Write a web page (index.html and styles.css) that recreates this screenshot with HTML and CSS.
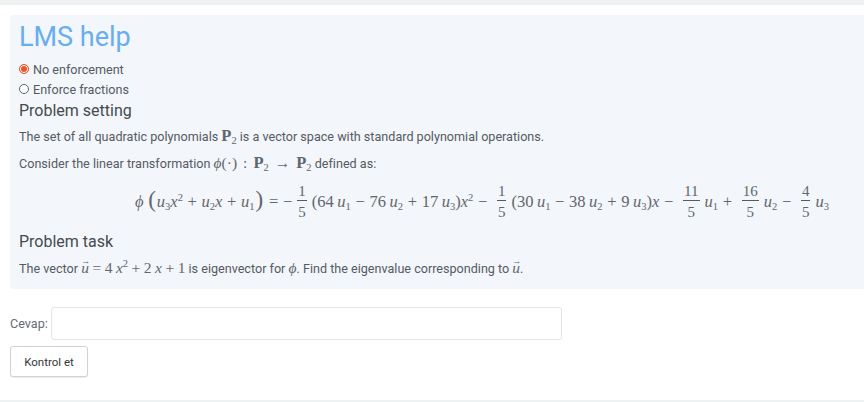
FILE: index.html
```html
<!DOCTYPE html>
<html lang="tr">
<head>
<meta charset="utf-8">
<title>LMS help</title>
<link rel="stylesheet" href="styles.css">
</head>
<body>
<div class="topbar"></div>
<main class="content">
  <section class="card">
    <h1 class="title">LMS help</h1>
    <form class="options">
      <label class="option"><span class="radio radio-on"></span>No enforcement</label>
      <label class="option"><span class="radio"></span>Enforce fractions</label>
    </form>
    <h2 class="heading">Problem setting</h2>
    <p class="para p1">The set of all quadratic polynomials <span class="m"><b class="bf">P</b><sub>2</sub></span> is a vector space with standard polynomial operations.</p>
    <p class="para p2">Consider the linear transformation <span class="m"><i>ϕ</i>(·)<span class="op">:</span><b class="bf">P</b><sub>2</sub><span class="op">→</span><b class="bf">P</b><sub>2</sub></span> defined as:</p>
    <div class="display m"><div class="display-inner"><i>ϕ</i><span class="thin"></span><span class="paren">(</span><i>u</i><sub>3</sub><i>x</i><sup>2</sup><span class="op">+</span><i>u</i><sub>2</sub><i>x</i><span class="op">+</span><i>u</i><sub>1</sub><span class="paren">)</span><span class="op">=</span>−<span class="frac"><span class="num">1</span><span class="den">5</span></span>(64<span class="thin"></span><i>u</i><sub>1</sub><span class="op">−</span>76<span class="thin"></span><i>u</i><sub>2</sub><span class="op">+</span>17<span class="thin"></span><i>u</i><sub>3</sub>)<i>x</i><sup>2</sup><span class="op">−</span><span class="frac"><span class="num">1</span><span class="den">5</span></span>(30<span class="thin"></span><i>u</i><sub>1</sub><span class="op">−</span>38<span class="thin"></span><i>u</i><sub>2</sub><span class="op">+</span>9<span class="thin"></span><i>u</i><sub>3</sub>)<i>x</i><span class="op">−</span><span class="frac frac-u"><span class="num">11</span><span class="den">5</span></span><i>u</i><sub>1</sub><span class="op">+</span><span class="frac frac-u"><span class="num">16</span><span class="den">5</span></span><i>u</i><sub>2</sub><span class="op">−</span><span class="frac frac-u"><span class="num">4</span><span class="den">5</span></span><i>u</i><sub>3</sub></div></div>
    <h2 class="heading task">Problem task</h2>
    <p class="para p3">The vector <span class="m"><i class="vec">u</i><span class="op">=</span>4<span class="thin"></span><i>x</i><sup>2</sup><span class="op">+</span>2<span class="thin"></span><i>x</i><span class="op">+</span>1</span> is eigenvector for <span class="m"><i>ϕ</i></span>. Find the eigenvalue corresponding to <span class="m"><i class="vec">u</i></span>.</p>
  </section>
  <form class="answer">
    <label class="answer-label" for="cevap">Cevap:</label>
    <input class="answer-input" id="cevap" type="text">
  </form>
  <button class="check" type="button">Kontrol et</button>
</main>
<div class="bottombar"></div>
</body>
</html>
```
FILE: styles.css
```css
* { box-sizing: border-box; }
html, body { margin: 0; padding: 0; background: #fff; }
body {
  width: 864px;
  height: 402px;
  overflow: hidden;
  font-family: Roboto, "Liberation Sans", sans-serif;
  font-size: 12.6px;
  color: #555b63;
  display: flex;
  flex-direction: column;
}
.topbar { height: 5px; background: #eff2f3; flex: none; }
.content { flex: 1; padding: 10px 0 0 10px; }
.card {
  height: 274px;
  background: #f3f6fa;
  border-radius: 4px 0 0 4px;
  padding: 5px 0 0 9px;
}
.title {
  margin: 0;
  font-size: 27px;
  line-height: 35px;
  font-weight: 400;
  color: #66aef0;
}
.options { margin-top: 4px; display: flex; flex-direction: column; }
.option { display: flex; align-items: center; height: 20px; font-size: 12.6px; }
.radio {
  width: 10px; height: 10px; margin-right: 4px;
  border: 1px solid #5f6368; border-radius: 50%;
  background: #fff; flex: none;
}
.radio-on {
  border-color: #e8552a;
  background: #e8552a;
  box-shadow: inset 0 0 0 1px #fff;
}
.heading {
  margin: 2px 0 0;
  font-size: 16px;
  line-height: 20px;
  font-weight: 400;
  color: #454a50;
}
.para { margin: 0; font-size: 12.6px; line-height: 18px; }
.p1 { margin-top: 6px; }
.p2 { margin-top: 8px; }
.m { font-family: "Liberation Serif", serif; font-size: 15.5px; color: #60666d; }
.m i { font-style: italic; }
.bf { font-weight: 700; font-size: 16.5px; }
sub, sup { font-size: 10.5px; line-height: 0; }
sub { vertical-align: -3px; }
sup { vertical-align: 6px; }
.display {
  margin-top: 6px;
  height: 46px;
  padding-left: 81px;
  padding-bottom: 10px;
  display: flex;
  align-items: center;
  justify-content: center;
  font-size: 16.5px;
}
.display-inner { white-space: nowrap; }
.thin { display: inline-block; width: 3.5px; }
.op { margin: 0 4.7px; }
.p2 .op { margin: 0 6px; }
.p3 .op { margin: 0 3.5px; }
.paren { font-size: 23px; line-height: 1; margin: 0 1px; }
.frac {
  display: inline-flex; flex-direction: column; align-items: center;
  vertical-align: 11px;
  margin: 0 5px -26px; font-size: 15px; line-height: 16px;
}
.num { border-bottom: 1px solid #555b63; padding: 0 1px 1px; }
.den { padding-top: 3px; }
.task { margin-top: 7px; }
.p3 { margin-top: 7px; }
.vec { position: relative; display: inline-block; }
.vec::before {
  content: "→";
  position: absolute;
  left: 0; top: -7px;
  font-size: 9px;
  font-style: normal;
}
.answer { display: flex; align-items: center; margin-top: 18px; height: 33px; }
.answer-label { font-size: 12.6px; margin-right: 3px; color: #666c74; }
.answer-input {
  width: 511px; height: 33px;
  border: 1px solid #e3e5e7; border-radius: 3px;
  background: #fff;
}
.check {
  display: block;
  margin-top: 6px;
  width: 78px; height: 31px;
  padding: 0;
  background: #fff;
  border: 1px solid #cfd2d5; border-radius: 3px;
  box-shadow: 0 1px 1px rgba(0,0,0,.08);
  font-family: Roboto, sans-serif; font-size: 11.5px; color: #33363a;
}
.bottombar { height: 2px; background: #eff2f3; flex: none; }
```
